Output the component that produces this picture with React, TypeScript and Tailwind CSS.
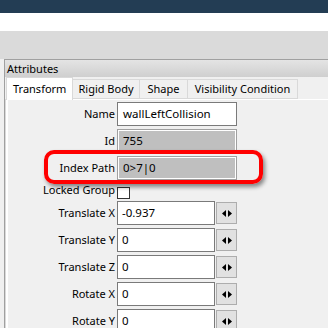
import React from "react";

type Row = { label: string; value: string; kind: "text" | "readonly" };

const rows: Row[] = [
  { label: "Name", value: "wallLeftCollision", kind: "text" },
  { label: "Id", value: "755", kind: "readonly" },
  { label: "Index Path", value: "0>7|0", kind: "readonly" },
];

const numberRows = [
  { label: "Translate X", value: "-0.937" },
  { label: "Translate Y", value: "0" },
  { label: "Translate Z", value: "0" },
  { label: "Rotate X", value: "0" },
  { label: "Rotate Y", value: "0" },
];

const tabs = [
  { name: "Transform", w: "w-[67px]" },
  { name: "Rigid Body", w: "w-[67px]" },
  { name: "Shape", w: "w-[48px]" },
  { name: "Visibility Condition", w: "w-[110px]" },
];

const SpinGlyph = () => (
  <svg width="10" height="7" viewBox="0 0 10 7">
    <polygon points="4,0 4,7 0,3.5" fill="#000" />
    <polygon points="6,0 6,7 10,3.5" fill="#000" />
  </svg>
);

const Label = ({ children }: { children: React.ReactNode }) => (
  <div className="w-[109px] shrink-0 pr-[2px] text-right text-[11px]">{children}</div>
);

const App = () => {
  return (
    <div className="relative w-[328px] h-[328px] overflow-hidden bg-[#f0f0f0] font-['Noto_Sans',sans-serif] text-[11px] text-black">
      <div className="h-[13px] bg-[#233d54]" />
      <div className="h-[18px] bg-white" />
      <div className="h-[28px] bg-[#dadada]" />

      <div className="flex">
        <div className="w-[4px] shrink-0 bg-[#f0f0f0]" />
        <div className="flex-1 border-l border-t border-[#a0a0a0]">
          {/* header */}
          <div className="h-[17px] pl-[2px] leading-[17px] bg-gradient-to-b from-[#e4e4e4] to-[#cfcfcf]">
            Attributes
          </div>

          {/* tabs */}
          <div className="flex h-[22px] items-end pl-[1px]">
            {tabs.map((t, i) =>
              i === 0 ? (
                <div
                  key={t.name}
                  className={`${t.w} h-[23px] -mb-[1px] bg-white border border-b-0 border-[#d9d9d9] pl-[6px] leading-[22px] relative z-10`}
                >
                  {t.name}
                </div>
              ) : (
                <div
                  key={t.name}
                  className={`${t.w} h-[20px] bg-[#f0f0f0] border border-l-0 border-[#d9d9d9] text-center leading-[18px]`}
                >
                  {t.name}
                </div>
              )
            )}
          </div>

          {/* tab page */}
          <div className="border-l border-[#d9d9d9] bg-white pl-[2px] pt-[1px] h-[240px]">
            <div className="h-full bg-[#f0f0f0] pt-[2px] flex flex-col gap-[3px]">
              {rows.map((r) => (
                <div key={r.label} className="flex items-center h-[24px]">
                  <Label>{r.label}</Label>
                  {r.kind === "text" ? (
                    <div className="w-[120px] h-[24px] bg-white border border-[#7a7a7a] pl-[5px] leading-[22px] text-[11.5px]">
                      {r.value}
                    </div>
                  ) : (
                    <div className="w-[120px] h-[24px] bg-[#bfbfbf] border border-[#a0a0a0] shadow-[inset_1px_1px_0_#fff,inset_-1px_-1px_0_#fff] pl-[5px] leading-[22px] text-[11.5px]">
                      {r.value}
                    </div>
                  )}
                </div>
              ))}

              <div className="flex items-center h-[15px]">
                <Label>Locked Group</Label>
                <div className="w-[13px] h-[12px] mt-[4px] bg-white border border-[#333]" />
              </div>

              {numberRows.map((r) => (
                <div key={r.label} className="flex items-center h-[24px]">
                  <Label>{r.label}</Label>
                  <div className="w-[98px] h-[24px] bg-white border border-[#7a7a7a] pl-[4px] leading-[22px] text-[11.5px]">
                    {r.value}
                  </div>
                  <div className="ml-[1px] w-[21px] h-[22px] bg-[#e1e1e1] border border-[#adadad] flex items-center justify-center">
                    <SpinGlyph />
                  </div>
                </div>
              ))}
            </div>
          </div>
        </div>
      </div>

      {/* highlight */}
      <div className="absolute left-[44px] top-[150px] w-[219px] h-[34px] rounded-[10px] border-[4px] border-[#ff0000] shadow-[2px_3px_4px_rgba(0,0,0,0.45)]" />
    </div>
  );
};

export default App;
